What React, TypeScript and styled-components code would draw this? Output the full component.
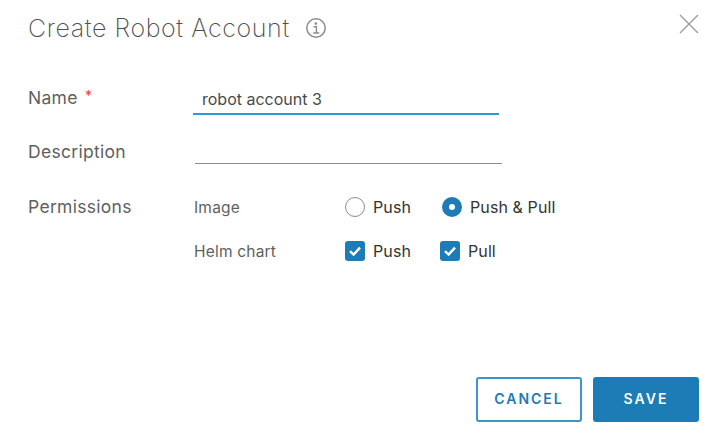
import React from 'react';
import styled, {createGlobalStyle} from "styled-components";

const GlobalStyle = createGlobalStyle`
  html, body {
    margin: 0;
    padding: 0;
    background: #fff;
  }
  * {
    box-sizing: border-box;
  }
`

const BLUE = "#1d7bb5"

const InfoIcon = () => (
    <svg width="22" height="22" viewBox="0 0 22 22" fill="none" stroke="#8c8c8c">
        <circle cx="11" cy="11" r="9.2" strokeWidth="1.5"/>
        <circle cx="10.8" cy="6.6" r="1.3" fill="#8c8c8c" stroke="none"/>
        <path d="M8.6 9.8h2.8v6M8.2 16h6" strokeWidth="1.4"/>
    </svg>
)

const CloseIcon = () => (
    <svg width="20" height="20" viewBox="0 0 20 20" fill="none" stroke="#9a9a9a" strokeWidth="1.3">
        <path d="M1 1l18 18M19 1L1 19"/>
    </svg>
)

const CheckIcon = () => (
    <svg width="20" height="20" viewBox="0 0 20 20" fill="none" stroke="#fff" strokeWidth="2.4">
        <path d="M5 10.2l3.6 3.4L15 6.6"/>
    </svg>
)

export default function App() {
    return (
        <Modal>
            <GlobalStyle/>
            <Header>
                <TitleGroup>
                    <Title>Create Robot Account</Title>
                    <InfoIcon/>
                </TitleGroup>
                <CloseButton><CloseIcon/></CloseButton>
            </Header>
            <Form>
                <NameRow>
                    <Label>Name <Required>*</Required></Label>
                    <InputValue>robot account 3</InputValue>
                </NameRow>
                <DescriptionRow>
                    <Label>Description</Label>
                    <EmptyInput/>
                </DescriptionRow>
                <PermissionsRow>
                    <Label>Permissions</Label>
                    <PermissionGrid>
                        <SubLabel>Image</SubLabel>
                        <Options>
                            <Option $width={97}><Radio/>Push</Option>
                            <Option><Radio $checked/>Push &amp; Pull</Option>
                        </Options>
                        <SubLabel>Helm chart</SubLabel>
                        <Options>
                            <Option $width={95}><Checkbox><CheckIcon/></Checkbox>Push</Option>
                            <Option><Checkbox><CheckIcon/></Checkbox>Pull</Option>
                        </Options>
                    </PermissionGrid>
                </PermissionsRow>
            </Form>
            <Footer>
                <OutlineButton>CANCEL</OutlineButton>
                <SolidButton>SAVE</SolidButton>
            </Footer>
        </Modal>
    );
};

const Modal = styled.div`
  width: 722px;
  height: 441px;
  padding: 13px 23px 19px 28px;
  display: flex;
  flex-direction: column;
  background: #fff;
  font-family: Inter, "Open Sans", sans-serif;
  overflow: hidden;
`

const Header = styled.div`
  display: flex;
  justify-content: space-between;
  align-items: flex-start;
  height: 30px;
`

const TitleGroup = styled.div`
  display: flex;
  align-items: center;
  gap: 15px;
  height: 30px;
`

const Title = styled.h1`
  margin: 0;
  font-size: 25px;
  line-height: 30px;
  font-weight: 250;
  letter-spacing: 0.6px;
  color: #4f4f4f;
`

const CloseButton = styled.div`
  display: flex;
  margin-top: 1px;
`

const Form = styled.div`
  display: flex;
  flex-direction: column;
  flex: 1;
  margin-top: 41px;
`

const NameRow = styled.div`
  display: flex;
  height: 31px;
`

const DescriptionRow = styled.div`
  display: flex;
  height: 24px;
  margin-top: 25px;
`

const PermissionsRow = styled.div`
  display: flex;
  margin-top: 31px;
`

const Label = styled.div`
  width: 165px;
  font-size: 17.5px;
  line-height: 24px;
  letter-spacing: 0.3px;
  color: #5f5f5f;
`

const Required = styled.span`
  margin-left: 2px;
  color: #e0432f;
  font-size: 14px;
  vertical-align: 3px;
`

const InputValue = styled.div`
  width: 306px;
  height: 31px;
  padding-left: 9px;
  border-bottom: 2px solid #2a9bd3;
  font-size: 16px;
  line-height: 30px;
  color: #4a4a4a;
`

const EmptyInput = styled.div`
  width: 307px;
  height: 24px;
  margin-left: 2px;
  border-bottom: 1px solid #8c8c8c;
`

const PermissionGrid = styled.div`
  display: grid;
  grid-template-columns: 151px auto;
  grid-auto-rows: 44px;
  margin-left: 1px;
  margin-top: -2px;
`

const SubLabel = styled.div`
  font-size: 15.5px;
  line-height: 29px;
  letter-spacing: 0.2px;
  color: #5f5f5f;
`

const Options = styled.div`
  display: flex;
  height: 28px;
`

const Option = styled.label<{ $width?: number }>`
  display: flex;
  align-items: center;
  gap: 8px;
  width: ${props => props.$width ? `${props.$width}px` : "auto"};
  font-size: 16px;
  letter-spacing: 0.1px;
  color: #333;
`

const Radio = styled.span<{ $checked?: boolean }>`
  width: 20px;
  height: 20px;
  border-radius: 50%;
  background: #fff;
  border: ${props => props.$checked ? `7px solid ${BLUE}` : "1.5px solid #8c8c8c"};
`

const Checkbox = styled.span`
  display: flex;
  width: 20px;
  height: 20px;
  border-radius: 3px;
  background: ${BLUE};
`

const Footer = styled.div`
  display: flex;
  justify-content: flex-end;
  gap: 11px;
`

const OutlineButton = styled.button`
  width: 106px;
  height: 45px;
  padding: 0 0 2px;
  border-radius: 3px;
  border: 2px solid #3d94c6;
  background: #fff;
  color: ${BLUE};
  font-family: inherit;
  font-size: 14px;
  font-weight: 600;
  letter-spacing: 2px;
`

const SolidButton = styled(OutlineButton)`
  border-color: ${BLUE};
  background: ${BLUE};
  color: #fff;
`
